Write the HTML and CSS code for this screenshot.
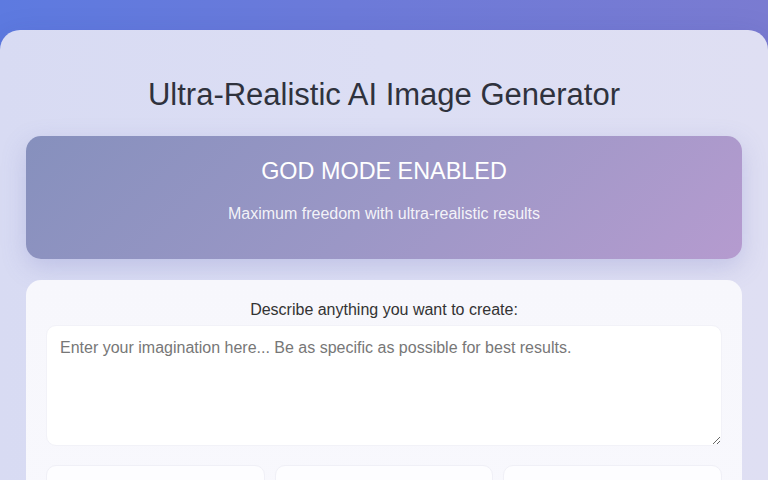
FILE: index.html
```html
<!DOCTYPE html>
<html lang="en">
<head>
<meta charset="utf-8">
<title>Ultra-Realistic AI Image Generator</title>
<link rel="stylesheet" href="styles.css">
</head>
<body>
<main class="container">
  <h1 class="title">Ultra-Realistic AI Image Generator</h1>
  <section class="god-mode">
    <h2 class="god-title">GOD MODE ENABLED</h2>
    <p class="god-sub">Maximum freedom with ultra-realistic results</p>
  </section>
  <section class="form-card">
    <label class="prompt-label" for="prompt">Describe anything you want to create:</label>
    <textarea id="prompt" class="prompt" placeholder="Enter your imagination here... Be as specific as possible for best results."></textarea>
    <div class="options">
      <div class="option"></div>
      <div class="option"></div>
      <div class="option"></div>
    </div>
  </section>
</main>
</body>
</html>
```
FILE: styles.css
```css
* { box-sizing: border-box; }
html, body { margin: 0; height: 100%; }
body {
  font-family: "Liberation Sans", Arial, sans-serif;
  background: linear-gradient(90deg, #5d7ae0 0%, #6c7ad9 45%, #7a7bd1 100%);
  padding-top: 30px;
  overflow: hidden;
}
.container {
  background: linear-gradient(90deg, #d8dbf3 0%, #dcdef4 50%, #dfdff3 100%);
  border-radius: 20px 20px 0 0;
  padding: 47px 26px 40px;
  min-height: 600px;
  box-shadow: 0 8px 32px rgba(31, 38, 135, 0.15);
}
.title {
  margin: 0 0 23px;
  font-size: 31px;
  font-weight: normal;
  line-height: 36px;
  text-align: center;
  color: #2f323d;
}
.god-mode {
  background: linear-gradient(135deg, #8690bd 0%, #9b97c6 50%, #b59bcf 100%);
  border-radius: 15px;
  padding: 21px 20px 36px;
  text-align: center;
  color: #fff;
  box-shadow: 0 8px 24px rgba(110, 115, 190, 0.25);
  margin-bottom: 21px;
}
.god-title {
  margin: 0 0 20px;
  font-size: 23.4px;
  font-weight: normal;
  line-height: 28px;
}
.god-sub {
  margin: 0;
  font-size: 16px;
  line-height: 18px;
  color: rgba(255, 255, 255, 0.9);
}
.form-card {
  background: linear-gradient(180deg, #f7f7fc 0%, #f8f8fd 100%);
  border-radius: 15px;
  padding: 21px 20px 20px;
  display: flex;
  flex-direction: column;
}
.prompt-label {
  display: block;
  text-align: center;
  font-size: 16px;
  line-height: 18px;
  color: #333;
  margin-bottom: 6px;
}
.prompt {
  display: block;
  width: 100%;
  height: 121px;
  border: 1px solid #f2f2f8;
  border-radius: 10px;
  background: #fff;
  padding: 13px 13px;
  font-family: "Liberation Sans", Arial, sans-serif;
  font-size: 16px;
  line-height: 18px;
  color: #333;
  resize: vertical;
  margin: 0 0 19px;
  outline: none;
}
.prompt::placeholder { color: #777; }
.options {
  display: grid;
  grid-template-columns: repeat(3, 1fr);
  gap: 10px;
}
.option {
  height: 46px;
  background: #fdfdff;
  border: 1px solid #f0f0f7;
  border-radius: 10px;
}
```
